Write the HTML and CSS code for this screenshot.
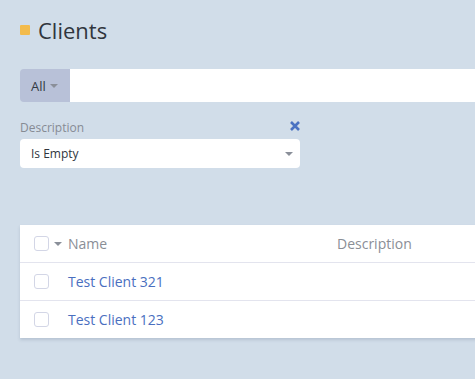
FILE: index.html
```html
<!DOCTYPE html>
<html lang="en">
<head>
  <meta charset="UTF-8" />
  <title>Clients</title>
  <link rel="stylesheet" href="styles.css">
</head>
<body>
  <div class="page">

    <!-- Page title -->
    <h1 class="page-title"><span class="title-mark"></span>Clients</h1>

    <!-- Search bar -->
    <div class="search-bar">
      <button class="scope-btn" type="button">All <span class="caret"></span></button>
      <input class="search-input" type="text" aria-label="Search" />
    </div>

    <!-- Filter -->
    <div class="filter">
      <div class="filter-head">
        <label class="filter-label">Description</label>
        <svg class="filter-remove" width="12" height="12" viewBox="0 0 12 12" aria-hidden="true">
          <path d="M2 2 L10 10 M10 2 L2 10" stroke="currentColor" stroke-width="2.6" stroke-linecap="butt"/>
        </svg>
      </div>
      <div class="filter-select">
        <span>Is Empty</span>
        <span class="caret"></span>
      </div>
    </div>

    <!-- Clients list -->
    <div class="list">
      <div class="list-row list-head">
        <div class="cell-check"><span class="checkbox"></span><span class="caret"></span></div>
        <div class="cell-name">Name</div>
        <div class="cell-desc">Description</div>
      </div>
      <div class="list-row">
        <div class="cell-check"><span class="checkbox"></span></div>
        <div class="cell-name"><a href="#">Test Client 321</a></div>
        <div class="cell-desc"></div>
      </div>
      <div class="list-row">
        <div class="cell-check"><span class="checkbox"></span></div>
        <div class="cell-name"><a href="#">Test Client 123</a></div>
        <div class="cell-desc"></div>
      </div>
    </div>

  </div>
</body>
</html>
```

FILE: styles.css
```css
/* Reset */
* {
  margin: 0;
  padding: 0;
  box-sizing: border-box;
  font-family: 'Open Sans', 'DejaVu Sans', sans-serif;
}

html, body {
  width: 475px;
  height: 379px;
  overflow: hidden;
  background: #d1dde9;
  color: #333a44;
}

/* Content is wider than the window and gets cut at the right */
.page {
  width: 475px;
  height: 379px;
  overflow: hidden;
  padding-left: 20px;
}

/* Title */
.page-title {
  display: flex;
  align-items: center;
  gap: 8px;
  height: 24px;
  margin-top: 18px;
  font-size: 22px;
  font-weight: 400;
  color: #30353d;
}

.title-mark {
  width: 10px;
  height: 10px;
  background: #f3bb4c;
  border-radius: 1px;
}

/* Small triangle caret */
.caret {
  display: inline-block;
  width: 0;
  height: 0;
  border-left: 4px solid transparent;
  border-right: 4px solid transparent;
  border-top: 4px solid #8a8f99;
}

/* Search bar */
.search-bar {
  display: flex;
  width: 600px;
  height: 33px;
  margin-top: 27px;
}

.scope-btn {
  display: flex;
  align-items: center;
  gap: 4px;
  width: 50px;
  padding-left: 11px;
  border: none;
  border-radius: 4px 0 0 4px;
  background: #b8c1d8;
  font-size: 13px;
  color: #333a44;
}

.search-input {
  flex: 1;
  border: none;
  background: #fff;
  outline: none;
}

/* Filter */
.filter {
  width: 280px;
  margin-top: 15px;
}

.filter-head {
  display: flex;
  align-items: center;
  justify-content: space-between;
  height: 20px;
}

.filter-label {
  font-size: 12px;
  color: #868b94;
}

.filter-remove {
  color: #4a72c2;
  margin-right: -1px;
  margin-top: -3px;
}

.filter-select {
  display: flex;
  align-items: center;
  justify-content: space-between;
  height: 29px;
  margin-top: 2px;
  padding: 0 7px 0 11px;
  background: #fff;
  border-radius: 4px;
  font-size: 12px;
  color: #30353d;
}

/* List */
.list {
  width: 600px;
  margin-top: 57px;
  background: #fff;
  box-shadow: 0 2px 3px rgba(60, 80, 110, 0.18);
}

.list-row {
  display: flex;
  align-items: center;
  height: 38px;
  border-top: 1px solid #e3e4ee;
}

.list-row.list-head {
  height: 37px;
  border-top: none;
}

.cell-check {
  display: flex;
  align-items: center;
  gap: 5px;
  width: 48px;
  padding-left: 14px;
}

.checkbox {
  width: 15px;
  height: 15px;
  border: 1px solid #d3d6e6;
  border-radius: 3px;
  background: #fff;
}

.cell-name {
  width: 269px;
  font-size: 14px;
}

.cell-name a {
  color: #4a6fbf;
  text-decoration: none;
}

.cell-desc {
  flex: 1;
  font-size: 14px;
}

.list-head .cell-name,
.list-head .cell-desc {
  color: #8a8e96;
}
```
